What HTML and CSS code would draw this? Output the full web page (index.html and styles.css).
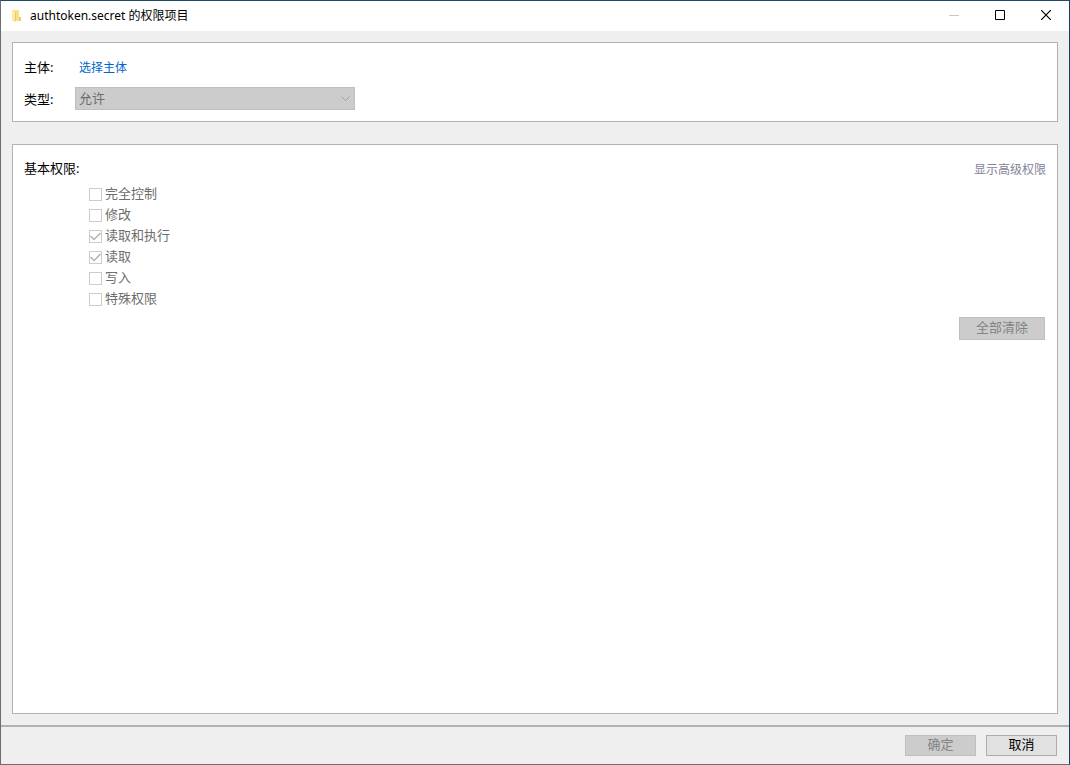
FILE: index.html
```html
<!DOCTYPE html>
<html lang="zh-CN">

<head>
    <meta charset="UTF-8">
    <meta name="viewport" content="width=device-width, initial-scale=1.0">
    <title>authtoken.secret 的权限项目</title>
    <link rel="stylesheet" href="styles.css">
</head>

<body>
    <div class="window">
        <header class="titlebar">
            <svg class="folder-icon" width="12" height="14" viewBox="0 0 12 14" aria-hidden="true">
                <path d="M1 1h7v7h2v4H1z" fill="#ffdf85" />
                <path d="M8 8h2v4H8z" fill="#f0ca6b" />
                <path d="M1 1l3 2v10l-3-1z" fill="#ffe9a6" />
                <path d="M4 3h1v9l-1 1z" fill="#eec765" />
            </svg>
            <h1 class="title">authtoken.secret 的权限项目</h1>
            <div class="window-buttons">
                <button class="window-btn" type="button" aria-label="最小化" disabled>
                    <svg width="10" height="10" viewBox="0 0 10 10"><path d="M0 5.5h10" stroke="#c8c8c8" /></svg>
                </button>
                <button class="window-btn" type="button" aria-label="最大化">
                    <svg width="10" height="10" viewBox="0 0 10 10"><path d="M.5.5h9v9h-9z" fill="none" stroke="#000" /></svg>
                </button>
                <button class="window-btn" type="button" aria-label="关闭">
                    <svg width="10" height="10" viewBox="0 0 10 10"><path d="M0 0l10 10M10 0L0 10" stroke="#000" stroke-width="1.2" /></svg>
                </button>
            </div>
        </header>

        <main class="content">
            <section class="panel principal">
                <span class="label">主体:</span>
                <a class="link" href="#">选择主体</a>
                <label class="label" for="type">类型:</label>
                <div class="select-box">
                    <select id="type" disabled>
                        <option>允许</option>
                    </select>
                    <svg class="arrow" width="9" height="6" viewBox="0 0 9 6" aria-hidden="true"><path d="M.5.5l4 4 4-4" fill="none" stroke="#a0a0a0" /></svg>
                </div>
            </section>

            <section class="panel permissions">
                <div class="permissions-header">
                    <h2 class="label">基本权限:</h2>
                    <a class="link muted" href="#">显示高级权限</a>
                </div>
                <div class="permission-list">
                    <label class="permission"><input type="checkbox" disabled>完全控制</label>
                    <label class="permission"><input type="checkbox" disabled>修改</label>
                    <label class="permission"><input type="checkbox" checked disabled>读取和执行</label>
                    <label class="permission"><input type="checkbox" checked disabled>读取</label>
                    <label class="permission"><input type="checkbox" disabled>写入</label>
                    <label class="permission"><input type="checkbox" disabled>特殊权限</label>
                </div>
                <button class="btn clear-btn" type="button" disabled>全部清除</button>
            </section>
        </main>

        <footer class="footer">
            <button class="btn" type="button" disabled>确定</button>
            <button class="btn" type="button">取消</button>
        </footer>
    </div>
</body>

</html>
```

FILE: styles.css
```css
* {
    box-sizing: border-box;
}

body {
    margin: 0;
    font-family: "Noto Sans", "Noto Sans CJK SC", sans-serif;
    font-size: 13px;
    line-height: 20px;
    color: #000;
}

.window {
    display: flex;
    flex-direction: column;
    min-height: 100vh;
    background-color: #efefef;
    border: 1px solid #6e6e6e;
    border-top-color: #1b4b6b;
    border-right-color: #1c3a66;
}

/* Title bar */
.titlebar {
    display: flex;
    align-items: center;
    height: 30px;
    padding-left: 10px;
    background-color: #fff;
}

.title {
    flex: 1;
    margin: 0 0 0 7px;
    font-size: 12px;
    font-weight: normal;
}

.window-buttons {
    display: flex;
    height: 100%;
}

.window-btn {
    display: flex;
    align-items: center;
    justify-content: center;
    width: 46px;
    padding: 0;
    padding-bottom: 2px;
    border: none;
    background: none;
}

.window-btn:enabled:hover {
    background-color: #e5e5e5;
}

/* Panels */
.content {
    flex: 1;
    display: flex;
    flex-direction: column;
    gap: 22px;
    padding: 11px;
}

.panel {
    padding: 11px;
    background-color: #fff;
    border: 1px solid #b2b2b2;
}

.principal {
    display: grid;
    grid-template-columns: 51px minmax(0, 280px);
    row-gap: 10px;
    align-items: center;
    padding-top: 14px;
}

.label {
    margin: 0;
    font-size: 13px;
    font-weight: normal;
}

.link {
    font-size: 12px;
    color: #0066cc;
    text-decoration: none;
}

.principal .label,
.principal .link {
    height: 20px;
}

.principal .link {
    padding-top: 1px;
    padding-left: 4px;
}

.select-box {
    position: relative;
}

.select-box select {
    display: block;
    width: 100%;
    height: 23px;
    padding: 0 3px 2px;
    border: 1px solid #bfbfbf;
    border-radius: 0;
    background-color: #ccc;
    color: #6d6d6d;
    font: inherit;
    opacity: 1;
    appearance: none;
}

.arrow {
    position: absolute;
    top: 9px;
    right: 5px;
    pointer-events: none;
}

.permissions {
    flex: 1;
    display: flex;
    flex-direction: column;
}

.permissions-header {
    display: flex;
    align-items: center;
    justify-content: space-between;
}

.permissions-header .label {
    padding-bottom: 1px;
}

.muted {
    padding-top: 4px;
    color: #838399;
}

.permission-list {
    display: flex;
    flex-direction: column;
    align-items: flex-start;
    padding: 2px 0 0 65px;
}

.permission {
    display: flex;
    align-items: center;
    gap: 3px;
    height: 21px;
    color: #6d6d6d;
}

.permission input {
    width: 13px;
    height: 13px;
    margin: 3px 0 0;
    border: 1px solid #ccc;
    background-color: #fff;
    appearance: none;
}

/* Tick mark */
.permission input:checked::before {
    content: "";
    display: block;
    width: 11px;
    height: 11px;
    background-color: #b0b0b0;
    clip-path: polygon(0 6px, 1px 5px, 4px 8px, 10px 2px, 11px 3px, 4px 10px);
}

/* Buttons */
.btn {
    width: 71px;
    height: 21px;
    padding: 0 0 2px;
    border: 1px solid #adadad;
    background-color: #e1e1e1;
    color: #000;
    font: inherit;
    line-height: 17px;
}

.btn:disabled {
    border-color: #bfbfbf;
    background-color: #ccc;
    color: #838383;
}

.clear-btn {
    align-self: flex-end;
    width: 86px;
    height: 23px;
    margin: 9px 1px 0 0;
}

.footer {
    display: flex;
    justify-content: flex-end;
    gap: 10px;
    padding: 8px 12px;
    border-top: 2px solid #b2b2b2;
}
```
